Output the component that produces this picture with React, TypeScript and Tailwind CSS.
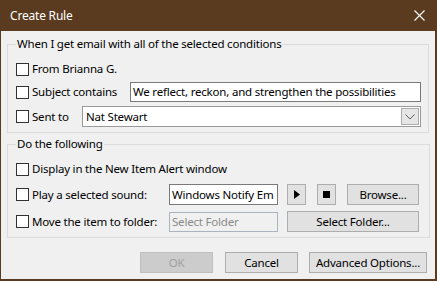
import React from 'react';

const Check = () => (
  <span className="inline-block w-[13px] h-[13px] border border-[#333333] bg-white shrink-0" />
);

const Btn = ({ children, className = '', disabled = false }: { children?: React.ReactNode; className?: string; disabled?: boolean }) => (
  <div
    className={
      disabled
        ? `h-[21px] flex items-center justify-center border border-[#bfbfbf] bg-[#cccccc] text-[#a0a0a0] ${className}`
        : `h-[21px] flex items-center justify-center border border-[#adadad] bg-[#e1e1e1] ${className}`
    }
  >
    {children}
  </div>
);

export default function App() {
  return (
    <div className="w-[437px] h-[281px] bg-[#5a3b1f] flex flex-col pl-px pr-[2px] pb-[2px] font-['Noto_Sans',sans-serif] text-[11.5px] tracking-[-0.2px] leading-[16px] text-black">
      {/* title bar */}
      <div className="h-[31px] shrink-0 flex items-center justify-between pl-[9px] pr-[10px] text-white text-[12px]">
        <span>Create Rule</span>
        <svg width="11" height="11" viewBox="0 0 11 11">
          <path d="M0.5 0.5 L10.5 10.5 M10.5 0.5 L0.5 10.5" stroke="white" strokeWidth="1.1" />
        </svg>
      </div>

      <div className="flex-1 bg-[#f0f0f0] flex flex-col pl-[6px] pr-[6px]">
        {/* conditions */}
        <fieldset className="mt-[5px] border border-[#dcdcdc] pl-[8px] pr-[7px] pb-[5px]">
          <legend className="px-px">When I get email with all of the selected conditions</legend>
          <div className="pt-[7px] h-[27px] flex items-end">
            <div className="h-[20px] flex items-center gap-[3px]">
              <Check />
              <span>From Brianna G.</span>
            </div>
          </div>
          <div className="mt-[3px] h-[20px] flex items-center">
            <div className="w-[114px] flex items-center gap-[3px]">
              <Check />
              <span>Subject contains</span>
            </div>
            <div className="flex-1 h-[20px] border border-[#7a7a7a] bg-white flex items-center px-[2px]">
              We reflect, reckon, and strengthen the possibilities
            </div>
          </div>
          <div className="mt-[4px] h-[21px] flex items-center">
            <div className="w-[66px] flex items-center gap-[3px]">
              <Check />
              <span>Sent to</span>
            </div>
            <div className="flex-1 h-[21px] border border-[#9a9a9a] bg-white flex items-center pl-[3px] pr-px">
              <span className="flex-1">Nat Stewart</span>
              <div className="w-[18px] h-[17px] border border-[#acacac] bg-[#e5e5e5] flex items-center justify-center">
                <svg width="10" height="6" viewBox="0 0 10 6">
                  <path d="M0.5 0.5 L5 5 L9.5 0.5" stroke="#606060" strokeWidth="1" fill="none" />
                </svg>
              </div>
            </div>
          </div>
        </fieldset>

        {/* actions */}
        <fieldset className="mt-[3px] border border-[#dcdcdc] pl-[8px] pr-[10px] pb-[5px]">
          <legend className="px-px">Do the following</legend>
          <div className="pt-[7px] h-[27px] flex items-end">
            <div className="h-[20px] flex items-center gap-[3px]">
              <Check />
              <span>Display in the New Item Alert window</span>
            </div>
          </div>
          <div className="mt-[5px] h-[21px] flex items-center">
            <div className="w-[153px] flex items-center gap-[3px]">
              <Check />
              <span>Play a selected sound:</span>
            </div>
            <div className="w-[109px] h-[21px] border border-[#7a7a7a] bg-white flex items-center px-[2px] overflow-hidden whitespace-nowrap">
              Windows Notify Em
            </div>
            <Btn className="ml-[9px] w-[19px]">
              <svg width="6" height="9" viewBox="0 0 6 9">
                <path d="M0 0 L6 4.5 L0 9 Z" fill="black" />
              </svg>
            </Btn>
            <Btn className="ml-[11px] w-[19px]">
              <span className="w-[7px] h-[7px] bg-black" />
            </Btn>
            <Btn className="ml-[11px] w-[72px]">Browse...</Btn>
          </div>
          <div className="mt-[6px] h-[21px] flex items-center">
            <div className="w-[153px] flex items-center gap-[3px]">
              <Check />
              <span>Move the item to folder:</span>
            </div>
            <div className="w-[109px] h-[20px] border border-[#abb3bf] bg-[#f0f0f0] text-[#8a8a8a] flex items-center px-[2px]">
              Select Folder
            </div>
            <Btn className="ml-[9px] w-[132px]">Select Folder...</Btn>
          </div>
        </fieldset>

        {/* dialog buttons */}
        <div className="mt-[14px] flex justify-end pr-[2px] gap-[12px]">
          <Btn disabled className="w-[73px]">OK</Btn>
          <Btn className="w-[73px]">Cancel</Btn>
          <Btn className="w-[118px] -ml-px">Advanced Options...</Btn>
        </div>
      </div>
    </div>
  );
}
